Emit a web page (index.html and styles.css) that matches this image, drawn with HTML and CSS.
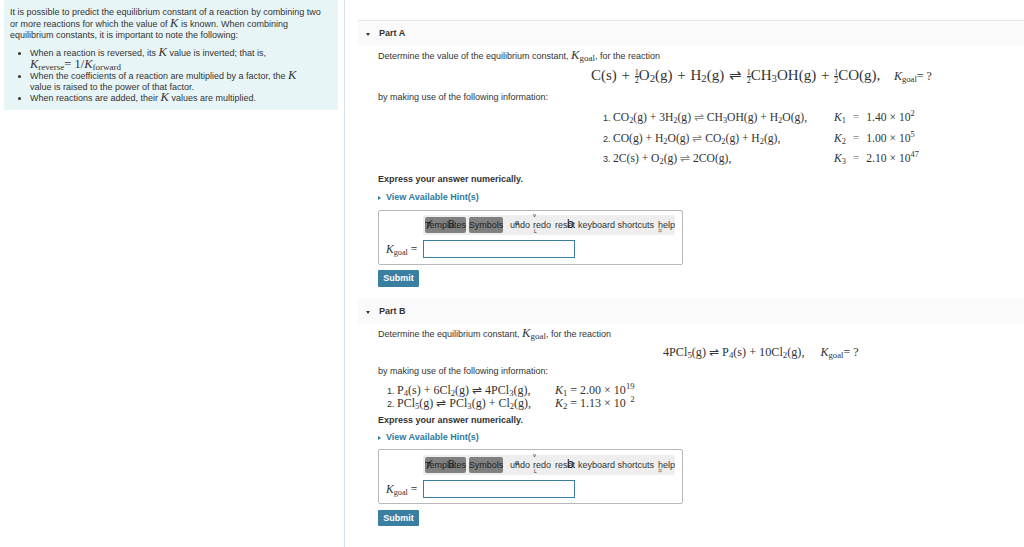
FILE: index.html
```html
<!DOCTYPE html>
<html lang="en">
<head>
<meta charset="utf-8">
<title>Equilibrium constants</title>
<link rel="stylesheet" href="styles.css">
</head>
<body>
<div class="page">
  <aside class="side">
    <div class="intro">
      <p class="intro-text">It is possible to predict the equilibrium constant of a reaction by combining two or more reactions for which the value of <i class="m">K</i> is known. When combining equilibrium constants, it is important to note the following:</p>
      <ul class="rules">
        <li>When a reaction is reversed, its <i class="m">K</i> value is inverted; that is,<br><span class="m kline"><i>K</i><sub>reverse</sub>= 1/<i>K</i><sub>forward</sub></span></li>
        <li>When the coefficients of a reaction are multiplied by a factor, the <i class="m">K</i> value is raised to the power of that factor.</li>
        <li>When reactions are added, their <i class="m">K</i> values are multiplied.</li>
      </ul>
    </div>
  </aside>
  <main class="main">
    <section class="part part-a">
      <h2 class="part-head"><span class="caret"></span>Part A</h2>
      <div class="part-body">
        <p class="txt">Determine the value of the equilibrium constant, <span class="m"><i>K</i><sub>goal</sub></span>, for the reaction</p>
        <div class="eq eq-a m">C(s) + <span class="fr"><span>1</span><span>2</span></span>O<sub>2</sub>(g) + H<sub>2</sub>(g) <span class="arr">⇌</span> <span class="fr"><span>1</span><span>2</span></span>CH<sub>3</sub>OH(g) + <span class="fr"><span>1</span><span>2</span></span>CO(g), <span class="keq"><i>K</i><sub>goal</sub>= ?</span></div>
        <p class="txt by-a">by making use of the following information:</p>
        <div class="info-a m">
          <div class="r"><span class="n">1. </span>CO<sub>2</sub>(g) + 3H<sub>2</sub>(g) <span class="arr sm">⇌</span> CH<sub>3</sub>OH(g) + H<sub>2</sub>O(g),</div>
          <div class="k"><i>K</i><sub>1</sub> <span class="eqs">=</span> 1.40 × 10<sup>2</sup></div>
          <div class="r"><span class="n">2. </span>CO(g) + H<sub>2</sub>O(g) <span class="arr sm">⇌</span> CO<sub>2</sub>(g) + H<sub>2</sub>(g),</div>
          <div class="k"><i>K</i><sub>2</sub> <span class="eqs">=</span> 1.00 × 10<sup>5</sup></div>
          <div class="r"><span class="n">3. </span>2C(s) + O<sub>2</sub>(g) <span class="arr sm">⇌</span> 2CO(g),</div>
          <div class="k"><i>K</i><sub>3</sub> <span class="eqs">=</span> 2.10 × 10<sup>47</sup></div>
        </div>
        <p class="txt bold express-a">Express your answer numerically.</p>
        <p class="hint"><span class="tri"></span>View Available Hint(s)</p>
        <div class="answer">
          <div class="toolbar">
            <span class="btn b1">Templates<i class="ov ov1">𝑓</i><i class="ov ov2">B</i></span>
            <span class="btn b2">Symbols</span>
            <span class="tool t1">undo<i class="ov ov3">ɞ</i></span>
            <span class="tool t2">redo<i class="ov ov4">v</i><i class="ov ov5">L</i></span>
            <span class="tool t3">reset<i class="ov ov6">b</i></span>
            <span class="tool t4">keyboard shortcuts</span>
            <span class="tool t5">help<i class="ov ov7">⌗</i></span>
          </div>
          <div class="row">
            <span class="lab m"><i>K</i><sub>goal</sub> =</span>
            <span class="input"></span>
          </div>
        </div>
        <span class="submit">Submit</span>
      </div>
    </section>
    <section class="part part-b">
      <h2 class="part-head"><span class="caret"></span>Part B</h2>
      <div class="part-body">
        <p class="txt">Determine the equilibrium constant, <span class="m"><i>K</i><sub>goal</sub></span>, for the reaction</p>
        <div class="eq eq-b m">4PCl<sub>5</sub>(g) <span class="arr">⇌</span> P<sub>4</sub>(s) + 10Cl<sub>2</sub>(g), <span class="keq"><i>K</i><sub>goal</sub>= ?</span></div>
        <p class="txt by-b">by making use of the following information:</p>
        <div class="info-b m">
          <div class="r"><span class="n">1. </span>P<sub>4</sub>(s) + 6Cl<sub>2</sub>(g) <span class="arr">⇌</span> 4PCl<sub>3</sub>(g),</div>
          <div class="k"><i>K</i><sub>1</sub> = 2.00 × 10<sup>19</sup></div>
          <div class="r"><span class="n">2. </span>PCl<sub>5</sub>(g) <span class="arr">⇌</span> PCl<sub>3</sub>(g) + Cl<sub>2</sub>(g),</div>
          <div class="k"><i>K</i><sub>2</sub> = 1.13 × 10<sup class="neg">&nbsp;&nbsp;2</sup></div>
        </div>
        <p class="txt bold express-b">Express your answer numerically.</p>
        <p class="hint"><span class="tri"></span>View Available Hint(s)</p>
        <div class="answer answer-b">
          <div class="toolbar">
            <span class="btn b1">Templates<i class="ov ov1">𝑓</i><i class="ov ov2">B</i></span>
            <span class="btn b2">Symbols</span>
            <span class="tool t1">undo<i class="ov ov3">ɞ</i></span>
            <span class="tool t2">redo<i class="ov ov4">v</i><i class="ov ov5">L</i></span>
            <span class="tool t3">reset<i class="ov ov6">b</i></span>
            <span class="tool t4">keyboard shortcuts</span>
            <span class="tool t5">help<i class="ov ov7">⌗</i></span>
          </div>
          <div class="row">
            <span class="lab m"><i>K</i><sub>goal</sub> =</span>
            <span class="input"></span>
          </div>
        </div>
        <span class="submit submit-b">Submit</span>
      </div>
    </section>
  </main>
</div>
</body>
</html>
```
FILE: styles.css
```css
* { box-sizing: border-box; }
html, body { margin: 0; padding: 0; background: #fff; }
body { font-family: "Liberation Sans", Arial, sans-serif; font-size: 9px; color: #333; overflow: hidden; }
.page { display: flex; width: 1024px; height: 547px; }
p { margin: 0; }
.m { font-family: "Liberation Serif", "Times New Roman", serif; }
sub, sup { font-size: 0.72em; line-height: 0; }
sub { vertical-align: -2px; }

.side { width: 345px; flex: none; border-right: 1px solid #d5e3ec; padding-left: 4px; }
.intro { width: 334px; height: 110px; background: #e8f5f7; padding: 7px 14px 0 6px; line-height: 11.5px; margin-right: 6px; }
.intro-text i { font-size: 12.5px; line-height: 8px; }
.rules { margin: 5px 0 0; padding: 0 10px 0 20px; line-height: 11px; }
.rules i.m { font-size: 12.5px; line-height: 8px; }
.rules li:first-child { line-height: 12px; }
.kline { font-size: 12.5px; line-height: 10px; display: inline-block; height: 10px; }
.kline sub { vertical-align: -1.5px; }

.main { flex: none; width: 679px; padding-left: 13px; padding-top: 20px; }
.part-head { height: 25px; margin: 0; background: #fafafa; font-size: 9px; font-weight: bold; color: #333; display: flex; align-items: center; padding-left: 8px; }
.part-a .part-head { border-top: 1px solid #e6e6e6; }
.caret { width: 0; height: 0; border-left: 2.5px solid transparent; border-right: 2.5px solid transparent; border-top: 3px solid #333; margin-right: 9px; margin-top: 2px; }
.part-body { padding-left: 20px; }
.txt { line-height: 12px; }
.part-body > .txt:first-child { margin-top: 4px; }
.part-b .part-body > .txt:first-child { margin-top: 3px; }
.txt .m { font-size: 12.5px; }
.eq { font-size: 15px; line-height: 18px; color: #333; white-space: nowrap; }
.eq-a { padding-left: 213px; margin-top: 4px; word-spacing: 1px; }
.eq-a .keq { margin-left: 9px; font-size: 12px; word-spacing: 0; }
.eq-b { padding-left: 285px; margin-top: 3px; font-size: 12.2px; }
.keq { margin-left: 13px; font-size: 12px; }
.fr { display: inline-flex; flex-direction: column; font-size: 8px; line-height: 7px; vertical-align: middle; text-align: center; }
.fr span:first-child { border-bottom: 0.5px solid #333; }
.arr { font-size: 1em; }
.arr.sm { color: #888; }
.by-a { margin-top: 6px; }
.info-a { display: grid; grid-template-columns: 231px auto; margin: 5px 0 0 225px; font-size: 11.6px; line-height: 20.5px; justify-content: start; }
.info-a .n, .info-b .n { font-family: "Liberation Sans", Arial, sans-serif; font-size: 9px; }
.eqs { margin: 0 4px; color: #888; }
.bold { font-weight: bold; }
.express-a { margin-top: 3px; }
.hint { font-weight: bold; color: #2f7a9e; margin-top: 6px; line-height: 12px; display: flex; align-items: center; }
.express-b + .hint { margin-top: 5px; }
.tri { width: 0; height: 0; border-top: 2.5px solid transparent; border-bottom: 2.5px solid transparent; border-left: 3px solid #2f7a9e; margin-right: 5px; margin-top: 2px; }
.answer { width: 305px; height: 55px; border: 1px solid #b8b8b8; border-radius: 2px; margin-top: 7px; padding: 4px 0 0 44px; }
.answer-b { margin-top: 6px; padding-top: 5px; }
.toolbar { width: 252px; height: 20px; background: #eee; border-radius: 2px; display: flex; align-items: center; padding: 1px 0 0 2px; color: #333; white-space: nowrap; }
.btn { position: relative; height: 16px; background: #808080; border-radius: 2px; display: flex; align-items: center; justify-content: center; color: #222; }
.b1 { width: 41px; }
.b2 { width: 34px; margin-left: 3px; }
.tool { position: relative; }
.t1 { margin-left: 7px; }
.t2 { margin-left: 3px; }
.t3 { margin-left: 4px; }
.t4 { margin-left: 3px; }
.t5 { margin-left: 4px; }
.ov { position: absolute; font-style: normal; color: #222; }
.ov1 { left: 1px; top: 1px; font-size: 12px; font-family: "Liberation Serif", serif; font-style: italic; }
.ov2 { left: 23px; top: 2px; font-size: 10px; font-weight: normal; }
.ov3 { left: 5px; top: -2px; font-size: 8px; }
.ov4 { left: 0; top: -8px; font-size: 6px; }
.ov5 { left: 1px; top: 8px; font-size: 5px; }
.ov6 { left: 12px; top: -3px; font-size: 12px; }
.ov7 { left: 0; top: 7px; font-size: 7px; }
.row { display: flex; align-items: center; margin-top: 5px; margin-left: -37px; }
.lab { width: 37px; font-size: 11.5px; white-space: nowrap; }
.input { width: 152px; height: 18px; background: #fff; border: 1px solid #3a7ea1; }
.submit { display: flex; align-items: center; justify-content: center; width: 41px; height: 17px; margin-top: 5px; background: #3a7ea1; color: #fff; font-weight: bold; border-radius: 1px; }
.submit-b { margin-top: 6px; height: 16px; }

.part-b { margin-top: 12px; }
.by-b { margin-top: 4px; }
.info-b { display: grid; grid-template-columns: 168px auto; margin: 7px 0 0 9px; font-size: 12px; line-height: 12.5px; justify-content: start; }
.express-b { margin-top: 3px; }
.neg { color: #333; }
```
